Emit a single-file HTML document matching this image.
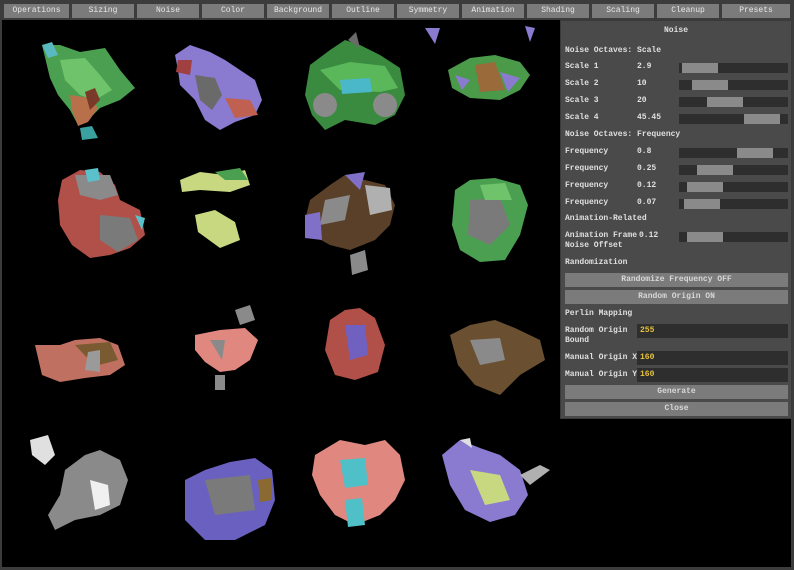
<!DOCTYPE html>
<html><head><meta charset="utf-8"><style>
*{margin:0;padding:0;box-sizing:border-box}
body{width:794px;height:567px;background:#3c3c3c;overflow:hidden;position:relative;font-family:"Liberation Mono","DejaVu Sans Mono",monospace;font-size:8px;color:#e2e2e2}
.tab{position:absolute;top:4px;height:14px;background:#7b7b7b;color:#e8e8e8;text-align:center;line-height:14px;font-size:8px}
#canvas{position:absolute;left:2px;top:20px;width:789px;height:547px;background:#000}
#panel{position:absolute;left:560px;top:20px;width:232px;height:399px;background:#4a4a4a;border:1px solid #3a3a3a}
.t{position:absolute;white-space:nowrap;font-weight:bold;color:#e0e0e0}
.tr{position:absolute;left:118px;width:109px;height:10px;background:#2e2e2e}
.h{position:absolute;top:0;height:10px;width:36px;background:#8a8a8a}
.btn{position:absolute;left:4px;width:223px;height:14px;background:#7b7b7b;color:#d8d8d8;text-align:center;line-height:14px;font-weight:bold}
.inp{position:absolute;left:76px;width:151px;height:14px;background:#2e2e2e;color:#e6c33a;line-height:14px;padding-left:3px;font-weight:bold}
</style></head><body>
<div class="tab" style="left:4px;width:65px">Operations</div>
<div class="tab" style="left:72px;width:62px">Sizing</div>
<div class="tab" style="left:137px;width:62px">Noise</div>
<div class="tab" style="left:202px;width:62px">Color</div>
<div class="tab" style="left:267px;width:62px">Background</div>
<div class="tab" style="left:332px;width:62px">Outline</div>
<div class="tab" style="left:397px;width:62px">Symmetry</div>
<div class="tab" style="left:462px;width:62px">Animation</div>
<div class="tab" style="left:527px;width:62px">Shading</div>
<div class="tab" style="left:592px;width:62px">Scaling</div>
<div class="tab" style="left:657px;width:62px">Cleanup</div>
<div class="tab" style="left:722px;width:68px">Presets</div>
<div id="canvas">
<svg width="789" height="547" viewBox="2 20 789 547">
<polygon points="42,45 60,45 80,52 105,48 120,70 135,88 120,100 100,108 90,118 78,125 70,110 58,95 50,78" fill="#4aa050"/>
<polygon points="60,60 85,58 100,75 112,90 95,100 80,95 65,80" fill="#6fc36a"/>
<polygon points="70,95 90,98 98,108 88,122 78,126 72,110" fill="#b8704a"/>
<polygon points="85,92 95,88 100,100 90,110" fill="#7a3a2a"/>
<polygon points="42,45 52,42 58,55 48,58" fill="#5ab8c0"/>
<polygon points="80,128 92,126 98,138 82,140" fill="#3aa0a0"/>
<polygon points="175,55 190,45 210,52 225,60 240,70 255,80 262,100 255,115 235,122 220,130 205,120 195,100 180,85 178,70" fill="#8a7ad0"/>
<polygon points="195,75 215,78 222,95 212,110 200,100" fill="#6a6a6a"/>
<polygon points="225,98 250,100 258,115 235,118" fill="#c06050"/>
<polygon points="178,60 192,60 190,75 176,72" fill="#a04040"/>
<polygon points="310,65 330,50 345,40 360,45 380,55 400,68 405,95 395,115 375,125 345,120 325,130 312,115 305,95" fill="#3a8a40"/>
<polygon points="320,70 350,62 385,66 398,88 380,92 340,90" fill="#5ab85a"/>
<circle cx="325" cy="105" r="12" fill="#8a8a8a"/><circle cx="385" cy="105" r="12" fill="#8a8a8a"/>
<polygon points="340,80 370,78 372,92 342,94" fill="#4ab8c8"/>
<polygon points="348,40 356,32 360,48" fill="#6a6a6a"/>
<polygon points="448,70 470,58 495,55 520,62 530,75 520,90 500,100 470,98 452,88" fill="#4a9a4a"/>
<polygon points="475,65 495,62 505,90 480,92" fill="#9a6a3a"/>
<polygon points="455,75 470,80 462,90" fill="#8a7ad0"/><polygon points="500,72 520,78 508,92" fill="#8a7ad0"/>
<polygon points="425,28 440,28 435,44" fill="#8a7ad0"/><polygon points="525,26 535,28 530,42" fill="#8a7ad0"/>
<polygon points="62,180 80,170 100,172 115,185 120,200 140,210 145,235 130,248 110,255 90,258 72,245 60,225 58,200" fill="#b05048"/>
<polygon points="75,175 110,175 118,195 100,200 80,195" fill="#8a8a8a"/>
<polygon points="100,215 130,218 138,240 118,252 100,240" fill="#7a7a7a"/>
<polygon points="85,170 98,168 100,180 88,182" fill="#5ac0cc"/><polygon points="135,215 145,218 142,230" fill="#5ac0cc"/>
<polygon points="180,180 200,172 225,175 245,170 250,185 230,192 200,190 182,192" fill="#c8d880"/>
<polygon points="195,215 215,210 235,222 240,240 220,248 198,232" fill="#c8d880"/>
<polygon points="215,172 240,168 248,180 225,180" fill="#4aa050"/>
<polygon points="310,200 330,185 345,175 365,180 385,185 395,205 390,225 375,240 350,250 330,245 312,235 305,220" fill="#5a4028"/>
<polygon points="325,200 350,195 345,220 320,225" fill="#8a8a8a"/>
<polygon points="365,185 390,188 392,210 370,215" fill="#b0b0b0"/>
<polygon points="305,215 320,212 322,240 305,238" fill="#8070c8"/><polygon points="345,175 365,172 360,190" fill="#8070c8"/>
<polygon points="350,255 365,250 368,270 352,275" fill="#8a8a8a"/>
<polygon points="455,190 470,180 495,178 520,185 528,205 520,235 505,260 480,262 460,250 452,225" fill="#4aa050"/>
<polygon points="470,200 500,198 510,225 490,245 468,235" fill="#7a7a7a"/>
<polygon points="480,185 505,183 512,200 485,200" fill="#6fc36a"/>
<polygon points="35,345 60,345 75,340 100,338 118,345 125,365 110,375 85,378 60,382 42,375" fill="#c07060"/>
<polygon points="75,345 110,342 118,360 95,366" fill="#7a5a30"/>
<polygon points="88,352 100,350 100,372 85,370" fill="#9a9a9a"/>
<polygon points="195,335 220,330 245,328 258,340 250,360 235,370 220,372 205,362 195,350" fill="#e08880"/>
<polygon points="210,340 225,340 222,360" fill="#8a8a8a"/><polygon points="235,310 250,305 255,320 240,325" fill="#8a8a8a"/>
<polygon points="215,375 225,375 225,390 215,390" fill="#8a8a8a"/>
<polygon points="330,320 345,310 360,308 375,318 385,345 378,372 355,380 335,375 325,350" fill="#b05048"/>
<polygon points="345,325 365,325 368,355 350,360" fill="#7060c0"/>
<polygon points="450,335 470,325 495,320 515,328 540,340 545,360 520,375 500,395 475,385 458,365" fill="#6a5030"/>
<polygon points="470,340 500,338 505,360 480,365" fill="#8a8a8a"/>
<polygon points="30,440 48,435 55,455 45,465 32,455" fill="#e0e0e0"/>
<polygon points="65,470 85,455 100,450 120,460 128,480 120,505 100,515 75,520 55,530 48,515 60,495" fill="#8a8a8a"/>
<polygon points="90,480 108,485 110,505 95,510" fill="#f0f0f0"/>
<polygon points="185,480 205,470 230,462 255,458 272,470 275,500 265,525 235,540 205,540 185,520" fill="#6a60c0"/>
<polygon points="205,480 250,475 255,510 215,515" fill="#7a7a7a"/>
<polygon points="258,480 272,478 272,500 260,502" fill="#8a6a30"/>
<polygon points="315,455 340,440 365,445 385,440 400,455 405,480 395,500 380,515 355,525 335,515 320,495 312,475" fill="#e08880"/>
<polygon points="340,460 365,458 368,485 345,488" fill="#50c0c8"/>
<polygon points="345,500 362,498 365,525 348,527" fill="#50c0c8"/>
<polygon points="442,455 460,440 480,448 500,455 520,470 528,495 515,515 490,522 465,510 450,485" fill="#8a7ad0"/>
<polygon points="470,470 500,475 510,500 485,505" fill="#c8d880"/>
<polygon points="520,475 540,465 550,470 530,485" fill="#b0b0b0"/>
<polygon points="460,440 470,438 472,448" fill="#e0e0e0"/>
</svg>
</div>
<div id="panel">
<div class="t" style="left:0;width:230px;text-align:center;top:5px">Noise</div>
<div class="t" style="left:4px;top:25px">Noise Octaves: Scale</div>
<div class="t" style="left:4px;top:41px">Scale 1</div><div class="t" style="left:76px;top:41px">2.9</div><div class="tr" style="top:42px"><div class="h" style="left:3px"></div></div>
<div class="t" style="left:4px;top:58px">Scale 2</div><div class="t" style="left:76px;top:58px">10</div><div class="tr" style="top:59px"><div class="h" style="left:13px"></div></div>
<div class="t" style="left:4px;top:75px">Scale 3</div><div class="t" style="left:76px;top:75px">20</div><div class="tr" style="top:76px"><div class="h" style="left:28px"></div></div>
<div class="t" style="left:4px;top:92px">Scale 4</div><div class="t" style="left:76px;top:92px">45.45</div><div class="tr" style="top:93px"><div class="h" style="left:65px"></div></div>
<div class="t" style="left:4px;top:109px">Noise Octaves: Frequency</div>
<div class="t" style="left:4px;top:126px">Frequency</div><div class="t" style="left:76px;top:126px">0.8</div><div class="tr" style="top:127px"><div class="h" style="left:58px"></div></div>
<div class="t" style="left:4px;top:143px">Frequency</div><div class="t" style="left:76px;top:143px">0.25</div><div class="tr" style="top:144px"><div class="h" style="left:18px"></div></div>
<div class="t" style="left:4px;top:160px">Frequency</div><div class="t" style="left:76px;top:160px">0.12</div><div class="tr" style="top:161px"><div class="h" style="left:8px"></div></div>
<div class="t" style="left:4px;top:177px">Frequency</div><div class="t" style="left:76px;top:177px">0.07</div><div class="tr" style="top:178px"><div class="h" style="left:5px"></div></div>
<div class="t" style="left:4px;top:193px">Animation-Related</div>
<div class="t" style="left:4px;top:210px">Animation Frame</div><div class="t" style="left:78px;top:210px">0.12</div><div class="t" style="left:4px;top:220px">Noise Offset</div><div class="tr" style="top:211px"><div class="h" style="left:8px"></div></div>
<div class="t" style="left:4px;top:237px">Randomization</div>
<div class="btn" style="top:252px">Randomize Frequency OFF</div>
<div class="btn" style="top:269px">Random Origin ON</div>
<div class="t" style="left:4px;top:288px">Perlin Mapping</div>
<div class="t" style="left:4px;top:305px">Random Origin</div><div class="t" style="left:4px;top:315px">Bound</div><div class="inp" style="top:303px">255</div>
<div class="t" style="left:4px;top:332px">Manual Origin X</div><div class="inp" style="top:330px">160</div>
<div class="t" style="left:4px;top:349px">Manual Origin Y</div><div class="inp" style="top:347px">160</div>
<div class="btn" style="top:364px">Generate</div>
<div class="btn" style="top:381px">Close</div>
</div>
</body></html>
